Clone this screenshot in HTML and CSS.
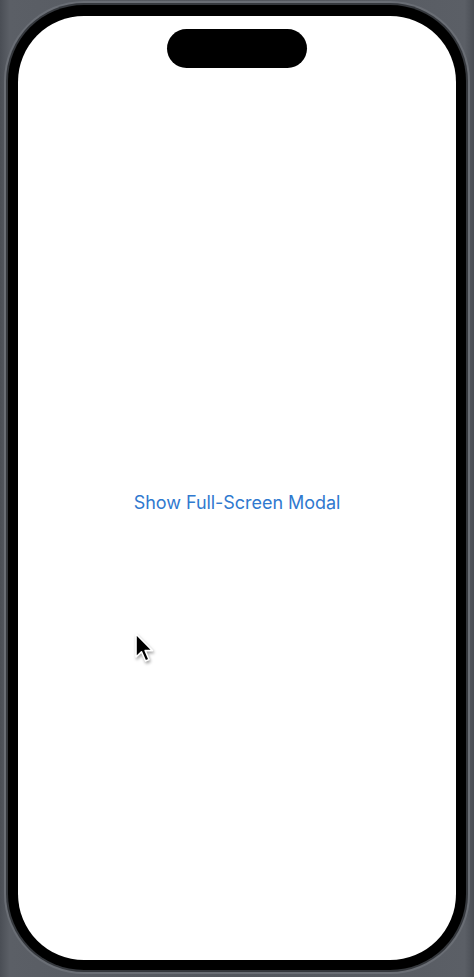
FILE: index.html
```html
<!DOCTYPE html>
<html lang="en">
<head>
<meta charset="utf-8">
<title>Full-Screen Modal</title>
<link rel="stylesheet" href="styles.css">
</head>
<body>
<div class="device">
  <div class="bezel">
    <div class="screen">
      <div class="island"></div>
      <main class="main">
        <button class="link-button" type="button">Show Full-Screen Modal</button>
      </main>
      <svg class="cursor" width="22" height="34" viewBox="0 0 22 34" aria-hidden="true">
        <path d="M2 2 L2 25 L7.5 19.8 L11.5 29 L15 27.5 L11.2 18.6 L18.5 18.6 Z" fill="#000" stroke="#fff" stroke-width="1.6" stroke-linejoin="round"/>
      </svg>
    </div>
  </div>
</div>
</body>
</html>
```

FILE: styles.css
```css
html, body {
  margin: 0;
  padding: 0;
}

body {
  width: 474px;
  height: 977px;
  background: #52565d;
  overflow: hidden;
  font-family: Inter, "Noto Sans", "Liberation Sans", sans-serif;
}

.device {
  box-sizing: border-box;
  width: 474px;
  height: 977px;
  padding: 5px 8px 7px 8px;
  background: linear-gradient(90deg, #4a4e55 0%, #5b5f66 2%, #53575e 50%, #5b5f66 98%, #4a4e55 100%);
}

.bezel {
  box-sizing: border-box;
  height: 100%;
  padding: 11px 10px 10px 10px;
  background: #000;
  border-radius: 76px;
  box-shadow: 0 0 0 2px #35383d, 0 0 0 4px #6a6e75;
}

.screen {
  position: relative;
  box-sizing: border-box;
  height: 100%;
  background: #fff;
  border-radius: 66px;
  display: flex;
  flex-direction: column;
  align-items: center;
  overflow: hidden;
}

.island {
  flex: none;
  width: 140px;
  height: 39px;
  margin-top: 13px;
  background: #000;
  border-radius: 20px;
}

.main {
  flex: 1;
  align-self: stretch;
  display: flex;
  align-items: center;
  justify-content: center;
  padding-bottom: 24px;
}

.link-button {
  border: 0;
  background: none;
  padding: 0;
  font-family: Inter, "Noto Sans", "Liberation Sans", sans-serif;
  font-size: 18px;
  letter-spacing: -0.05px;
  color: #3079cf;
  cursor: pointer;
}

.cursor {
  position: absolute;
  left: 116px;
  top: 616px;
  filter: drop-shadow(1px 2px 1.5px rgba(0, 0, 0, 0.35));
}
```
